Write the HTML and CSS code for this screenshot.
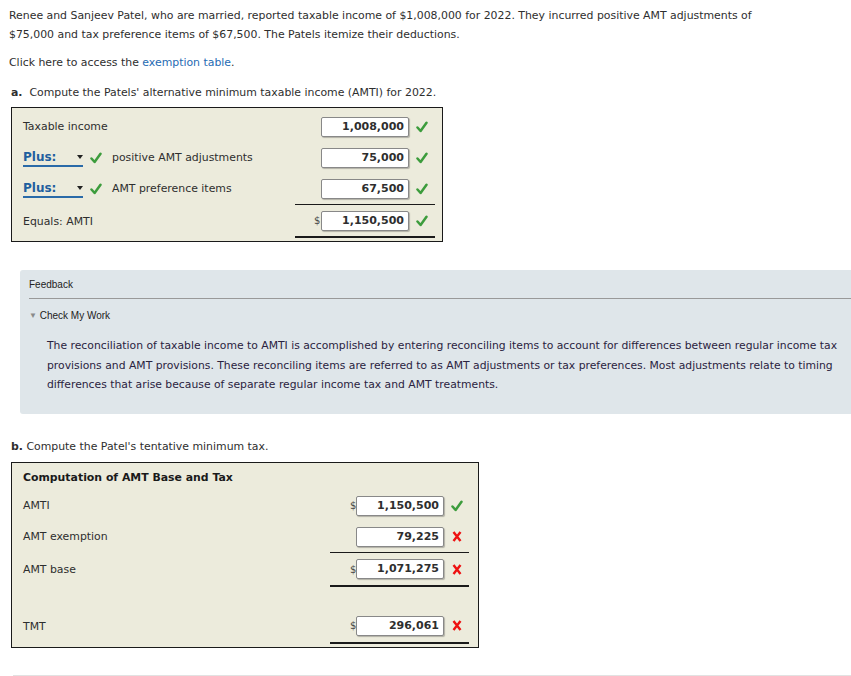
FILE: index.html
```html
<!DOCTYPE html>
<html lang="en">
<head>
  <meta charset="UTF-8" />
  <title>Alternative Minimum Tax</title>
  <link rel="stylesheet" href="styles.css">
</head>
<body>

<div class="question-wrap">
  <p class="intro">Renee and Sanjeev Patel, who are married, reported taxable income of $1,008,000 for 2022. They incurred positive AMT adjustments of<br>$75,000 and tax preference items of $67,500. The Patels itemize their deductions.</p>

  <p class="link-line">Click here to access the <a href="#" class="link">exemption table</a>.</p>

  <p class="part-title"><b>a.</b>&nbsp; Compute the Patels' alternative minimum taxable income (AMTI) for 2022.</p>

  <!-- part a table -->
  <div class="calc-box box-a">
    <div class="calc-row">
      <div class="label">Taxable income</div>
      <div class="amount">
        <span class="dollar"></span>
        <span class="field">1,008,000</span>
        <span class="mark"><svg width="12" height="12" viewBox="0 0 12 12"><path d="M1.5 6.5 L4.6 10 L10.5 1.8" class="ok"/></svg></span>
      </div>
    </div>
    <div class="calc-row">
      <div class="label">
        <span class="select">Plus:<i class="arrow"></i></span>
        <span class="mark small"><svg width="12" height="12" viewBox="0 0 12 12"><path d="M1.5 6.5 L4.6 10 L10.5 1.8" class="ok"/></svg></span>
        positive AMT adjustments
      </div>
      <div class="amount">
        <span class="dollar"></span>
        <span class="field">75,000</span>
        <span class="mark"><svg width="12" height="12" viewBox="0 0 12 12"><path d="M1.5 6.5 L4.6 10 L10.5 1.8" class="ok"/></svg></span>
      </div>
    </div>
    <div class="calc-row">
      <div class="label">
        <span class="select">Plus:<i class="arrow"></i></span>
        <span class="mark small"><svg width="12" height="12" viewBox="0 0 12 12"><path d="M1.5 6.5 L4.6 10 L10.5 1.8" class="ok"/></svg></span>
        AMT preference items
      </div>
      <div class="amount">
        <span class="dollar"></span>
        <span class="field">67,500</span>
        <span class="mark"><svg width="12" height="12" viewBox="0 0 12 12"><path d="M1.5 6.5 L4.6 10 L10.5 1.8" class="ok"/></svg></span>
      </div>
    </div>
    <div class="calc-row sum-row">
      <div class="label">Equals: AMTI</div>
      <div class="amount subtotal total">
        <span class="dollar">$</span>
        <span class="field">1,150,500</span>
        <span class="mark"><svg width="12" height="12" viewBox="0 0 12 12"><path d="M1.5 6.5 L4.6 10 L10.5 1.8" class="ok"/></svg></span>
      </div>
    </div>
  </div>

  <!-- feedback panel -->
  <div class="feedback">
    <div class="feedback-head">Feedback</div>
    <div class="check-work"><span class="tri">&#9660;</span> Check My Work</div>
    <p class="feedback-text">The reconciliation of taxable income to AMTI is accomplished by entering reconciling items to account for differences between regular income tax<br>provisions and AMT provisions. These reconciling items are referred to as AMT adjustments or tax preferences. Most adjustments relate to timing<br>differences that arise because of separate regular income tax and AMT treatments.</p>
  </div>

  <p class="part-title part-b"><b>b.</b> Compute the Patel's tentative minimum tax.</p>

  <!-- part b table -->
  <div class="calc-box box-b">
    <div class="box-title">Computation of AMT Base and Tax</div>
    <div class="calc-row">
      <div class="label">AMTI</div>
      <div class="amount">
        <span class="dollar">$</span>
        <span class="field">1,150,500</span>
        <span class="mark"><svg width="12" height="12" viewBox="0 0 12 12"><path d="M1.5 6.5 L4.6 10 L10.5 1.8" class="ok"/></svg></span>
      </div>
    </div>
    <div class="calc-row">
      <div class="label">AMT exemption</div>
      <div class="amount">
        <span class="dollar"></span>
        <span class="field">79,225</span>
        <span class="mark"><svg width="10" height="11" viewBox="0 0 10 11"><path d="M1.5 1 L8.5 10 M8.5 1 L1.5 10" class="bad"/></svg></span>
      </div>
    </div>
    <div class="calc-row sum-row">
      <div class="label">AMT base</div>
      <div class="amount subtotal total">
        <span class="dollar">$</span>
        <span class="field">1,071,275</span>
        <span class="mark"><svg width="10" height="11" viewBox="0 0 10 11"><path d="M1.5 1 L8.5 10 M8.5 1 L1.5 10" class="bad"/></svg></span>
      </div>
    </div>
    <div class="calc-row tall">
      <div class="label">TMT</div>
      <div class="amount total">
        <span class="dollar">$</span>
        <span class="field">296,061</span>
        <span class="mark"><svg width="10" height="11" viewBox="0 0 10 11"><path d="M1.5 1 L8.5 10 M8.5 1 L1.5 10" class="bad"/></svg></span>
      </div>
    </div>
  </div>

  <div class="bottom-rule"></div>
</div>

</body>
</html>
```

FILE: styles.css
```css
/* General Styling */
body {
  font-family: "DejaVu Sans", Verdana, sans-serif;
  font-size: 10.9px;
  color: #2e2e2e;
  background-color: #ffffff;
  margin: 0;
  overflow: hidden;
}

.question-wrap {
  padding: 6px 0 0 9px;
}

p {
  margin: 0;
  line-height: 19px;
}

.intro {
  white-space: nowrap;
}

.link-line {
  margin-top: 9px;
}

.link {
  color: #1f6bb3;
  text-decoration: none;
}

.part-title {
  margin-top: 11px;
  padding-left: 2px;
}

/* Calculation boxes */
.calc-box {
  background-color: #ecebdc;
  border: 1px solid #1a1a1a;
  margin-left: 2px;
  box-sizing: border-box;
}

.box-a {
  width: 432px;
  margin-top: 5px;
  padding: 3px 7px 3px 0;
}

.calc-row {
  display: flex;
  justify-content: space-between;
  align-items: stretch;
  height: 31px;
}

.calc-row.sum-row {
  height: 34px;
}

.label {
  display: flex;
  align-items: center;
  padding-left: 11px;
  white-space: nowrap;
}

.amount {
  display: flex;
  align-items: center;
  justify-content: flex-end;
  width: 140px;
}

.amount.subtotal {
  border-top: 1px solid #1a1a1a;
}

.amount.total {
  border-bottom: 2px solid #1a1a1a;
}

.dollar {
  width: 7px;
  font-size: 10px;
  color: #4a4a4a;
  text-align: left;
}

.field {
  display: inline-block;
  width: 88px;
  height: 20px;
  box-sizing: border-box;
  line-height: 18px;
  padding-right: 4px;
  text-align: right;
  font-size: 11px;
  font-weight: bold;
  background-color: #ffffff;
  border: 1px solid #888888;
  border-radius: 2px;
  box-shadow: 1px 1px 1px rgba(0, 0, 0, 0.25);
}

.mark {
  display: flex;
  justify-content: center;
  align-items: center;
  width: 26px;
}

.mark.small {
  width: 12px;
  margin: 0 10px 0 7px;
}

.ok {
  fill: none;
  stroke: #3c9c3c;
  stroke-width: 2.5;
  stroke-linecap: round;
  stroke-linejoin: round;
}

.bad {
  fill: none;
  stroke: #ee1111;
  stroke-width: 2.4;
}

/* Operator dropdown */
.select {
  position: relative;
  display: inline-block;
  width: 60px;
  height: 15px;
  line-height: 14px;
  font-size: 12px;
  font-weight: bold;
  color: #1f5f9f;
  border-bottom: 2px solid #2a6aa8;
  margin-top: 1px;
}

.arrow {
  position: absolute;
  right: 0;
  top: 5px;
  border-left: 3px solid transparent;
  border-right: 3px solid transparent;
  border-top: 4px solid #222222;
}

/* Feedback panel */
.feedback {
  margin: 28px 0 0 11px;
  background-color: #dfe6ea;
  border-radius: 3px 0 0 3px;
  height: 144px;
  padding-left: 9px;
}

.feedback-head {
  font-family: "Liberation Sans", Arial, sans-serif;
  font-size: 10px;
  height: 27px;
  line-height: 27px;
  padding-top: 1px;
  border-bottom: 1px solid #999999;
  color: #222222;
}

.check-work {
  font-family: "Liberation Sans", Arial, sans-serif;
  font-size: 10px;
  color: #222222;
  margin-top: 11px;
  line-height: 12px;
}

.tri {
  font-size: 8px;
  color: #8a8a8a;
  vertical-align: 1px;
}

.feedback-text {
  margin: 14px 0 0 18px;
  line-height: 19.5px;
  font-size: 10.8px;
  white-space: nowrap;
  color: #2a2340;
}

.part-b {
  margin-top: 23px;
  padding-left: 2px;
}

/* Part b box */
.box-b {
  width: 468px;
  margin-top: 6px;
  padding: 0 9px 3px 0;
}

.box-title {
  font-weight: bold;
  color: #1a1a1a;
  padding: 8px 0 0 11px;
  height: 27px;
  box-sizing: border-box;
}

.box-b .amount {
  width: 139px;
}

.box-b .dollar {
  width: 6px;
}

.box-b .mark {
  width: 25px;
}

.box-b .calc-row.sum-row {
  height: 35px;
}

.box-b .calc-row.tall {
  height: 57px;
  align-items: flex-end;
}

.box-b .calc-row.tall .label {
  height: 33px;
  padding-bottom: 2px;
  box-sizing: border-box;
}

.box-b .calc-row.tall .amount {
  height: 33px;
}

.bottom-rule {
  margin: 27px 0 0 4px;
  border-top: 1px solid #e2e2e2;
}
```
